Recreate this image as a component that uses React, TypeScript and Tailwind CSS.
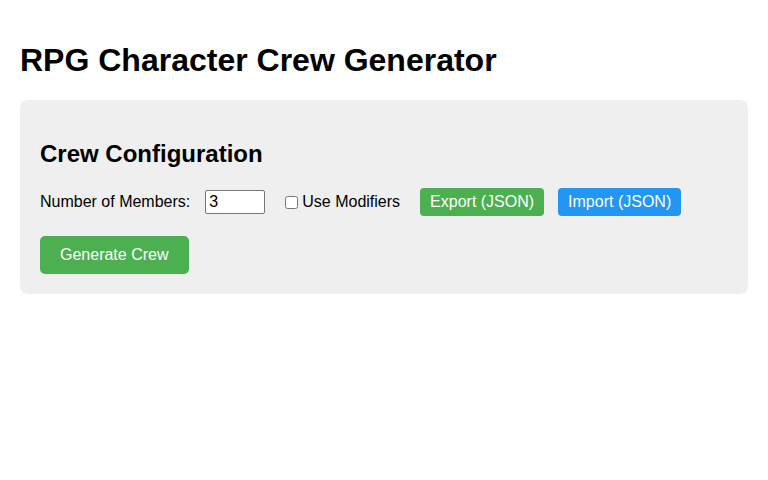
export default function App() {
  return (
    <div className="min-h-[480px] bg-white p-5 font-['Liberation_Sans',Arial,sans-serif] text-black">
      <h1 className="mt-[22px] mb-[21px] text-[32px] font-bold leading-[37px]">RPG Character Crew Generator</h1>

      <div className="rounded-lg bg-[#efefef] p-5">
        <h2 className="mt-5 mb-5 text-2xl font-bold leading-[28px]">Crew Configuration</h2>

        <div className="flex h-7 items-center text-base">
          <label htmlFor="members">Number of Members:</label>
          <input
            id="members"
            type="number"
            defaultValue={3}
            className="ml-[15px] h-6 w-[60px] rounded-[2px] border border-[#767676] bg-white px-[3px] text-base leading-none [appearance:textfield] [&::-webkit-inner-spin-button]:appearance-none"
          />
          <label className="ml-[20px] flex items-center">
            <input type="checkbox" className="mr-[4px] h-[13px] w-[13px]" />
            Use Modifiers
          </label>
          <button className="ml-[20px] h-7 rounded bg-[#4caf50] px-[10px] text-white">Export (JSON)</button>
          <button className="ml-[14px] h-7 rounded bg-[#2196f3] px-[10px] text-white">Import (JSON)</button>
        </div>

        <button className="mt-5 h-[38px] rounded-[5px] bg-[#4caf50] px-5 text-base text-white">Generate Crew</button>
      </div>
    </div>
  );
}
